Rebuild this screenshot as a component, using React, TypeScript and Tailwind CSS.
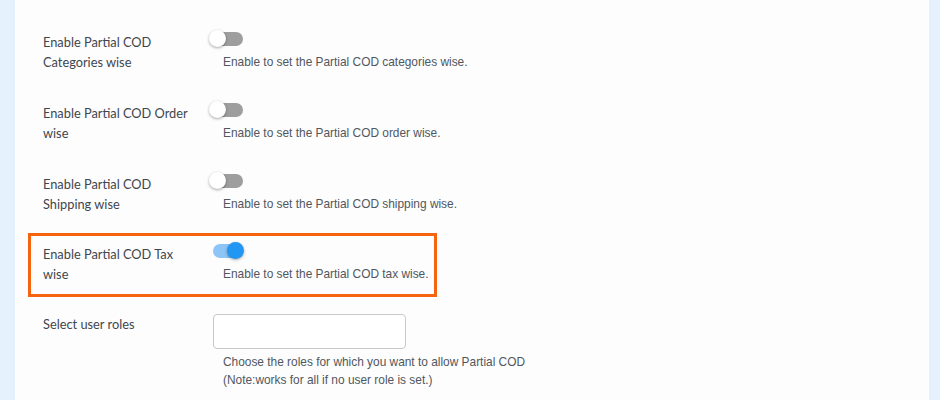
import React from "react";

function Toggle({ on }: { on?: boolean }) {
  return (
    <div className="relative h-[17px] w-[36px]">
      <div
        className={
          "absolute left-[4px] top-[1.5px] h-[14px] w-[30px] rounded-full " +
          (on ? "bg-[#8cc5f6]" : "bg-[#9e9e9e]")
        }
      />
      <div
        className={
          "absolute top-0 h-[17px] w-[17px] rounded-full shadow-[0_1px_3px_rgba(0,0,0,0.35)] " +
          (on ? "left-[18px] bg-[#2196f3]" : "left-0 bg-white")
        }
      />
    </div>
  );
}

const labelCls =
  "w-[166px] shrink-0 text-[12.8px] leading-[20px] text-[#40464d] [font-family:Lato,'Noto_Sans',sans-serif]";
const descCls =
  "pl-[14px] text-[11.9px] leading-[18px] text-[#50575e] [font-family:'Liberation_Sans',Arial,sans-serif]";

function ToggleRow({
  label,
  desc,
  on,
}: {
  label: React.ReactNode;
  desc: string;
  on?: boolean;
}) {
  return (
    <div className="flex">
      <div className={labelCls}>{label}</div>
      <div className="flex flex-col">
        <div className="mt-[-2px]">
          <Toggle on={on} />
        </div>
        <div className={descCls + " mt-[6px]"}>{desc}</div>
      </div>
    </div>
  );
}

export default function App() {
  return (
    <div className="h-[400px] w-[940px] overflow-hidden bg-[#e5f2fd]">
      <div className="ml-[15px] h-full w-[914px] bg-[#fdfdfd] pt-[21px]">
        <div className="h-[71px] pl-[28px] pt-[11px]">
          <ToggleRow
            label={
              <>
                Enable Partial COD
                <br />
                Categories wise
              </>
            }
            desc="Enable to set the Partial COD categories wise."
          />
        </div>
        <div className="h-[71px] pl-[28px] pt-[11px]">
          <ToggleRow
            label={
              <>
                Enable Partial COD Order
                <br />
                wise
              </>
            }
            desc="Enable to set the Partial COD order wise."
          />
        </div>
        <div className="h-[71px] pl-[28px] pt-[11px]">
          <ToggleRow
            label={
              <>
                Enable Partial COD
                <br />
                Shipping wise
              </>
            }
            desc="Enable to set the Partial COD shipping wise."
          />
        </div>
        <div className="h-[71px]">
          <div className="ml-[13px] mt-[-1px] h-[64px] w-[409px] border-[3px] border-[#f7640f] pl-[12px] pt-[8px]">
            <ToggleRow
              label={
                <>
                  Enable Partial COD Tax
                  <br />
                  wise
                </>
              }
              desc="Enable to set the Partial COD tax wise."
              on
            />
          </div>
        </div>
        <div className="flex pl-[28px] pt-[10px]">
          <div className={labelCls}>Select user roles</div>
          <div className="flex flex-col">
            <div className="ml-[4px] h-[35px] w-[193px] rounded-[4px] border border-[#c8c8c8] bg-white" />
            <div className={descCls + " mt-[4px]"}>
              Choose the roles for which you want to allow Partial COD
              <br />
              (Note:works for all if no user role is set.)
            </div>
          </div>
        </div>
      </div>
    </div>
  );
}
